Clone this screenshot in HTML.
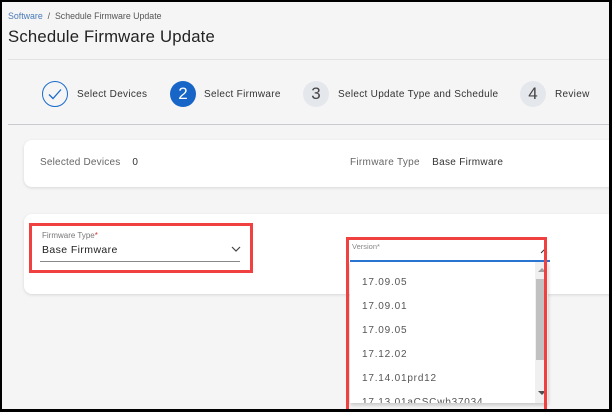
<!DOCTYPE html><html><head><style>
*{margin:0;padding:0;box-sizing:border-box}
body{width:612px;height:412px;overflow:hidden;background:#000;font-family:"Liberation Sans",sans-serif;position:relative}
#pg{position:absolute;left:2px;top:2px;width:607px;height:407px;background:#f5f5f6;overflow:hidden}
.a{position:absolute;white-space:nowrap}
.c{position:absolute;border-radius:50%;width:26px;height:26px;text-align:center;line-height:26px;font-size:17px}
.s{font-size:10px;color:#333;letter-spacing:.3px}
.card{position:absolute;background:#fff;border-radius:8px;box-shadow:0 1px 3px rgba(0,0,0,.12)}
.it{position:absolute;left:12px;font-size:10px;color:#555;letter-spacing:.8px}
</style></head><body><div id="pg">
<div class="a" style="left:6px;top:9px;font-size:8.8px;color:#555"><span style="color:#4a7ab8">Software</span> &nbsp;/&nbsp; Schedule Firmware Update</div>
<div class="a" style="left:6px;top:25px;font-size:16.7px;color:#222;letter-spacing:.2px">Schedule Firmware Update</div>
<div class="a" style="left:6px;top:57px;width:601px;height:1px;background:#e2e2e4"></div>
<div class="c" style="left:40px;top:79px;border:1.5px solid #1a6ccc;color:#1a6ccc"><svg width="23" height="23" viewBox="0 0 23 23" style="position:absolute;left:0;top:0"><path d="M6 12.5l4 4 8-9" fill="none" stroke="#1a6ccc" stroke-width="1.3"/></svg></div>
<div class="a s" style="left:75px;top:87px">Select Devices</div>
<div class="c" style="left:168px;top:79px;background:#1665c7;color:#fff">2</div>
<div class="a s" style="left:202px;top:87px">Select Firmware</div>
<div class="c" style="left:301px;top:79px;background:#e4e7ec;color:#444">3</div>
<div class="a s" style="left:336px;top:87px">Select Update Type and Schedule</div>
<div class="c" style="left:518px;top:79px;background:#e4e7ec;color:#444">4</div>
<div class="a s" style="left:553px;top:87px">Review</div>
<div class="a" style="left:6px;top:122px;width:601px;height:1px;background:#c8cacf"></div>
<div class="card" style="left:22px;top:138px;width:600px;height:47px"></div>
<div class="a" style="left:38px;top:155px;font-size:10px;color:#666;letter-spacing:.2px">Selected Devices &nbsp;&nbsp; <span style="color:#333">0</span></div>
<div class="a" style="left:348px;top:155px;font-size:10px;color:#666;letter-spacing:.3px">Firmware Type &nbsp;&nbsp; <span style="color:#333">Base Firmware</span></div>
<div class="card" style="left:22px;top:212px;width:600px;height:80px"></div>
<div class="a" style="left:40px;top:229px;font-size:8px;color:#777">Firmware Type<span style="color:#d33">*</span></div>
<div class="a" style="left:40px;top:242px;font-size:10.5px;color:#222;letter-spacing:.4px">Base Firmware</div>
<svg class="a" style="left:229px;top:244px" width="10" height="7"><path d="M1 1l4 4 4-4" fill="none" stroke="#444" stroke-width="1.2"/></svg>
<div class="a" style="left:38px;top:259px;width:200px;height:1px;background:#888"></div>
<div class="a" style="left:27px;top:221px;width:224px;height:50px;border:3px solid #f04040"></div>
<div class="a" style="left:350px;top:240px;font-size:7.5px;color:#888">Version*</div>
<svg class="a" style="left:538px;top:246px" width="8" height="6"><path d="M1 5l3-3 3 3" fill="none" stroke="#333" stroke-width="1"/></svg>
<div class="a" style="left:348px;top:258px;width:200px;height:1.5px;background:#2a77d4"></div>
<div class="a" style="left:348px;top:260px;width:198px;height:141px;background:#fff;box-shadow:0 2px 4px rgba(0,0,0,.2);overflow:hidden">
<div class="it" style="top:15px">17.09.05</div><div class="it" style="top:39px">17.09.01</div><div class="it" style="top:63px">17.09.05</div><div class="it" style="top:87px">17.12.02</div><div class="it" style="top:111px">17.14.01prd12</div><div class="it" style="top:135px">17.13.01aCSCwb37034</div>
<div class="a" style="left:185px;top:0;width:13px;height:141px;background:#f0f0f0"></div>
<div class="a" style="left:186px;top:17px;width:11px;height:81px;background:#c1c1c1"></div>
<div class="a" style="left:188px;top:6px;width:0;height:0;border:4px solid transparent;border-bottom:4px solid #a0a0a0;border-top:0"></div>
<div class="a" style="left:188px;top:129px;width:0;height:0;border:4px solid transparent;border-top:4px solid #505050;border-bottom:0"></div>
</div>
<div class="a" style="left:344px;top:235px;width:201px;height:175px;border:3px solid #f04040"></div>
</div></body></html>
